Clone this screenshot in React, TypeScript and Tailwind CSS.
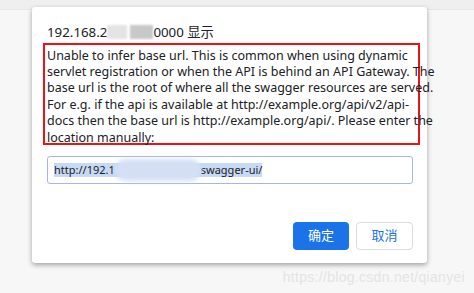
import React from 'react';

const lines = [
  'Unable to infer base url. This is common when using dynamic',
  'servlet registration or when the API is behind an API Gateway. The',
  'base url is the root of where all the swagger resources are served.',
  'For e.g. if the api is available at http://example.org/api/v2/api-',
  'docs then the base url is http://example.org/api/. Please enter the',
  'location manually:',
];

export default function App() {
  return (
    <div className="relative w-[474px] h-[293px] overflow-hidden bg-[#f7f7f7] font-['Noto_Sans','Noto_Sans_CJK_SC',sans-serif]">
      <div className="h-[10px] bg-[#efefef] border-b border-[#e6e6e6]" />

      {/* watermark */}
      <div className="absolute right-[9px] bottom-[5px] text-[14px] tracking-[0.3px] text-[#e4e4e4] font-['Liberation_Sans',sans-serif]">
        https://blog.csdn.net/qianyei
      </div>

      {/* dialog */}
      <div className="absolute left-[32px] top-[7px] w-[395px] h-[256px] bg-white rounded-[3px] shadow-[0_2px_5px_rgba(0,0,0,0.35)] pl-[11px] pr-[8px] pt-[15px]">
        <div className="pl-[4px] text-[13.3px] leading-[20px] text-[#202124] flex items-center whitespace-nowrap">
          <span>192.168.2</span>
          <span className="inline-block w-[20px] h-[14px] bg-[#e4e4e4] blur-[1px]" />
          <span className="inline-block w-[23px] h-[14px] ml-[3px] bg-[#c8c8c8] blur-[1px]" />
          <span>0000 显示</span>
        </div>

        <div className="mt-[1px] w-[377px] h-[102px] border-[2.5px] border-[#e8141a] pl-[2px] pt-[2.5px] text-[12.5px] leading-[16.4px] text-[#202124]">
          {lines.map((l) => (
            <div key={l} className="whitespace-nowrap">{l}</div>
          ))}
        </div>

        <div className="mt-[11px] ml-[4px] w-[366px] h-[28px] border border-[#a8b6e3] rounded-[3px] flex items-center pl-[6px] text-[11px] text-[#202124]">
          <div className="flex items-center bg-[#c6d9f5] h-[14px]">
            <span>http://192.1</span>
            <span className="inline-block w-[86px] h-[22px] rounded-full bg-[#d3e0f4] blur-[2px]" />
            <span>swagger-ui/</span>
          </div>
        </div>

        <div className="mt-[38px] flex justify-end gap-[7px] pr-[6px]">
          <button className="w-[56px] h-[28px] rounded-[4px] bg-[#1a73e8] text-white text-[13px]">确定</button>
          <button className="w-[57px] h-[28px] rounded-[4px] bg-white border border-[#dadce0] text-[#1a73e8] text-[13px]">取消</button>
        </div>
      </div>
    </div>
  );
}
